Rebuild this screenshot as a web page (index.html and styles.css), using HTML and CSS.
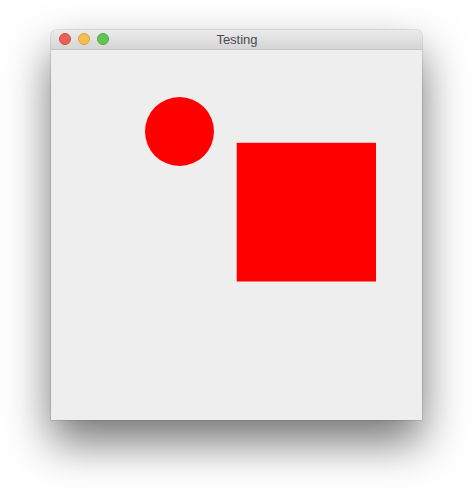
FILE: index.html
```html
<!DOCTYPE html>
<html>
<head>
<meta charset="utf-8">
<link rel="stylesheet" href="styles.css">
</head>
<body>
<div class="window">
  <div class="titlebar">
    <div class="lights">
      <span class="light red"></span>
      <span class="light yellow"></span>
      <span class="light green"></span>
    </div>
    <div class="title">Testing</div>
  </div>
  <div class="content">
    <svg class="canvas" width="371" height="370" viewBox="0 0 371 370">
      <circle cx="128.5" cy="81.5" r="34.5" fill="#ff0000"/>
      <rect x="185.7" y="92.8" width="139.3" height="138.7" fill="#ff0000"/>
    </svg>
  </div>
</div>
</body>
</html>
```
FILE: styles.css
```css
html, body {
  margin: 0;
  padding: 0;
  background: #ffffff;
}
body {
  padding: 29.5px 0 0 51px;
  width: 474px;
  height: 494px;
  box-sizing: border-box;
  overflow: hidden;
}
.window {
  width: 371px;
  height: 390px;
  border-radius: 5px 5px 0 0;
  background: #eeeeee;
  box-shadow: 0 22px 45px 0 rgba(0, 0, 0, 0.55), 0 0 0 0.5px rgba(0, 0, 0, 0.2);
  display: flex;
  flex-direction: column;
  overflow: hidden;
}
.titlebar {
  height: 20px;
  flex: 0 0 20px;
  box-sizing: border-box;
  background: linear-gradient(#ebebeb, #d5d5d5);
  border-bottom: 1px solid #c6c6c6;
  display: flex;
  align-items: center;
  position: relative;
  border-radius: 5px 5px 0 0;
}
.lights {
  display: flex;
  gap: 7px;
  padding-left: 7.5px;
  align-items: center;
}
.light {
  width: 12px;
  height: 12px;
  border-radius: 50%;
  box-sizing: border-box;
}
.red { background: #ec5f56; border: 0.5px solid #d24a42; }
.yellow { background: #f5be4f; border: 0.5px solid #d9a13a; }
.green { background: #61c554; border: 0.5px solid #4ca93f; }
.title {
  position: absolute;
  left: 0;
  right: 0;
  top: 0;
  bottom: 0;
  text-align: center;
  font-family: "Liberation Sans", Arial, sans-serif;
  font-size: 13px;
  line-height: 20px;
  color: #4d4d4d;
  padding-left: 1px;
}
.content {
  flex: 1;
  background: #eeeeee;
}
.canvas {
  display: block;
}
```
